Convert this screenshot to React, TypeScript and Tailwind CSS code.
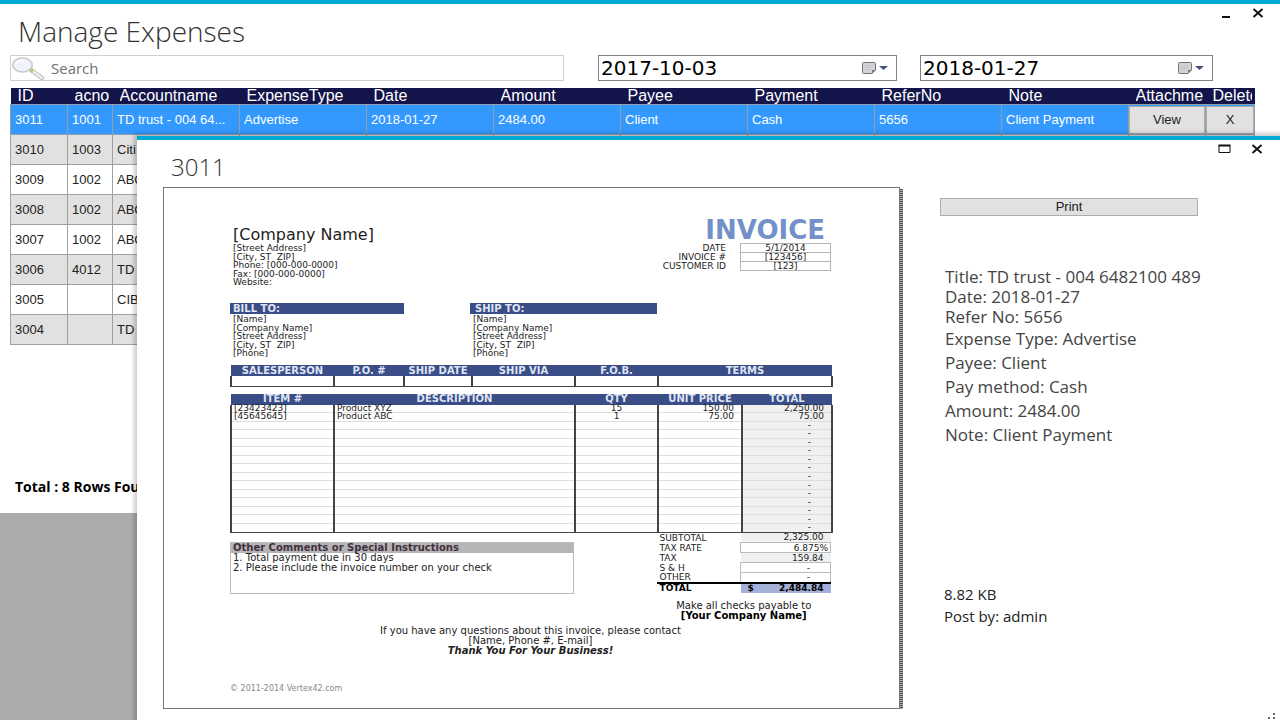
import type { ReactNode } from "react";

interface IExpense {
  id: string;
  acno: string;
  account: string;
}

const columns = [
  "ID",
  "acno",
  "Accountname",
  "ExpenseType",
  "Date",
  "Amount",
  "Payee",
  "Payment",
  "ReferNo",
  "Note",
  "Attachment",
  "Delete",
];

const selected = [
  "3011",
  "1001",
  "TD trust - 004 64...",
  "Advertise",
  "2018-01-27",
  "2484.00",
  "Client",
  "Cash",
  "5656",
  "Client Payment",
];

const expenses: IExpense[] = [
  { id: "3010", acno: "1003", account: "Citi" },
  { id: "3009", acno: "1002", account: "ABC" },
  { id: "3008", acno: "1002", account: "ABC" },
  { id: "3007", acno: "1002", account: "ABC" },
  { id: "3006", acno: "4012", account: "TD" },
  { id: "3005", acno: "", account: "CIBC" },
  { id: "3004", acno: "", account: "TD" },
];

function CloseIcon() {
  return (
    <svg width="12" height="10" viewBox="0 0 12 10" aria-hidden="true">
      <path d="M1.5 1 10.5 9M10.5 1 1.5 9" stroke="#111" strokeWidth="1.8" />
    </svg>
  );
}

function SearchIcon() {
  return (
    <svg width="34" height="23" viewBox="0 0 34 23" aria-hidden="true">
      <path d="M20 13 31 21" stroke="#bdbdbd" strokeWidth="4.5" strokeLinecap="round" />
      <path d="M21 13.5 31 21" stroke="#f0f0f0" strokeWidth="2.5" strokeLinecap="round" />
      <path d="M19 11.5 22 14.5" stroke="#b9cf4a" strokeWidth="3" />
      <ellipse cx="11.5" cy="8" rx="9.8" ry="7" fill="#f1f3fb" stroke="#c6c8cc" strokeWidth="1.6" />
      <path d="M5 7c1-3 5-4 8-3.5" stroke="#fff" strokeWidth="2" fill="none" />
    </svg>
  );
}

function DateBox({ label, value }: { label: string; value: string }) {
  return (
    <div className="flex h-full w-full items-center border border-[#828282] bg-white">
      <input
        aria-label={label}
        defaultValue={value}
        className="min-w-0 flex-1 pl-0.5 font-['DejaVu_Sans',sans-serif] text-[20px] leading-6 text-black outline-none"
      />
      <button type="button" aria-label={`Open ${label} calendar`} className="mr-2 flex">
        <svg width="26" height="12" viewBox="0 0 26 12" aria-hidden="true">
          <path
            d="M1.5.5h11a1 1 0 0 1 1 1V8L10 11.5H1.5a1 1 0 0 1-1-1v-9a1 1 0 0 1 1-1Z"
            fill="#d4d4d8"
            stroke="#77706e"
          />
          <path d="M3 3.5h8M3 5.5h8M3 7.5h6" stroke="#b9bcc6" strokeDasharray="1.5 1" />
          <path d="M10 11.5V8h3.5Z" fill="#777" />
          <path d="M17 4h9l-4.5 4Z" fill="#43527c" />
        </svg>
      </button>
    </div>
  );
}

function ExpenseTable() {
  return (
    <table className="w-full table-fixed border-collapse text-left text-[13px] leading-4 text-[#222]">
      <colgroup>
        <col className="w-[57px]" />
        <col className="w-[45px]" />
        {columns.slice(2, 10).map((name) => (
          <col key={name} />
        ))}
        <col className="w-[77px]" />
        <col className="w-[49px]" />
      </colgroup>
      <thead>
        <tr className="h-4 bg-[#13144a] text-[16px] text-white">
          {columns.map((name) => (
            <th key={name} className="p-0 pl-[7px] font-normal">
              <span className="mr-[3px] block overflow-x-clip whitespace-nowrap">{name}</span>
            </th>
          ))}
        </tr>
      </thead>
      <tbody>
        <tr className="h-[30px] bg-[#3399ff] text-white">
          {selected.map((cell, i) => (
            <td key={i} className="border border-[#8f9fb0] px-1 py-0 whitespace-nowrap">
              {cell}
            </td>
          ))}
          <td className="h-[30px] border border-[#8f9fb0] p-0">
            <button type="button" className="block h-[28px] w-full border border-[#adadad] bg-[#e1e1e1] text-[#222]">
              View
            </button>
          </td>
          <td className="h-[30px] border border-[#8f9fb0] p-0">
            <button type="button" className="block h-[28px] w-full border border-[#adadad] bg-[#e1e1e1] text-[#222]">
              X
            </button>
          </td>
        </tr>
        {expenses.map((row) => (
          <tr key={row.id} className="h-[30px] odd:bg-white even:bg-[#e1e1e1]">
            <td className="border border-[#a0a0a0] px-1 py-0">{row.id}</td>
            <td className="border border-[#a0a0a0] px-1 py-0">{row.acno}</td>
            <td className="border border-[#a0a0a0] px-1 py-0">{row.account}</td>
            {columns.slice(3).map((name) => (
              <td key={name} className="border border-[#a0a0a0] p-0" />
            ))}
          </tr>
        ))}
      </tbody>
    </table>
  );
}

function Lines({ items }: { items: string[] }) {
  return (
    <div className="flex h-[42px] flex-col justify-between pl-[3px] text-[9px]">
      {items.map((item) => (
        <p key={item} className="leading-[8px] whitespace-pre">
          {item}
        </p>
      ))}
    </div>
  );
}

function InvoiceCols() {
  return (
    <colgroup>
      <col className="w-[103px]" />
      <col className="w-[70px]" />
      <col className="w-[68px]" />
      <col className="w-[103px]" />
      <col className="w-[83px]" />
      <col className="w-[84px]" />
      <col className="w-[90px]" />
    </colgroup>
  );
}

function HeadCell({ children, span = 1 }: { children: ReactNode; span?: number }) {
  return (
    <th colSpan={span} className="p-0 font-bold whitespace-nowrap">
      {children}
    </th>
  );
}

const address = ["[Name]", "[Company Name]", "[Street Address]", "[City, ST  ZIP]", "[Phone]"];

const items = [
  { code: "[23423423]", text: "Product XYZ", qty: "15", price: "150.00", total: "2,250.00" },
  { code: "[45645645]", text: "Product ABC", qty: "1", price: "75.00", total: "75.00" },
  ...Array.from({ length: 13 }, () => ({ code: "", text: "", qty: "", price: "", total: "-" })),
];

function Invoice() {
  return (
    <article className="flex min-h-[522px] min-w-0 flex-1 flex-col border border-[#777] pt-[29px] pr-[68px] pl-[66px] font-['DejaVu_Sans',sans-serif] text-[10px] leading-[8px] text-[#222]">
      <header className="flex justify-between">
        <div className="pt-[9px]">
          <h2 className="pl-[3px] text-[16px] leading-[18px]">[Company Name]</h2>
          <Lines
            items={["[Street Address]", "[City, ST  ZIP]", "Phone: [000-000-0000]", "Fax: [000-000-0000]", "Website:"]}
          />
        </div>
        <div className="flex flex-col items-end">
          <h2 className="pr-[6px] text-[26px] leading-[26px] font-bold text-[#7391c8]">INVOICE</h2>
          <table className="border-collapse text-center text-[9px]">
            <tbody>
              {[
                ["DATE", "5/1/2014"],
                ["INVOICE #", "[123456]"],
                ["CUSTOMER ID", "[123]"],
              ].map(([label, value]) => (
                <tr key={label} className="h-[9px]">
                  <th className="p-0 pr-[14px] text-right font-normal">{label}</th>
                  <td className="w-[90px] border border-[#b5b5b5] p-0">{value}</td>
                </tr>
              ))}
            </tbody>
          </table>
        </div>
      </header>

      <section className="mt-[17px] grid grid-cols-[174fr_66fr_187fr_174fr]">
        <div>
          <h3 className="mb-px h-[11px] bg-[#3b4d86] pl-[3px] leading-[11px] font-bold text-[#dfe5f4]">BILL TO:</h3>
          <Lines items={address} />
        </div>
        <div className="col-start-3">
          <h3 className="mb-px h-[11px] bg-[#3b4d86] pl-[5px] leading-[11px] font-bold text-[#dfe5f4]">SHIP TO:</h3>
          <Lines items={address} />
        </div>
      </section>

      <table className="mt-2 w-full table-fixed border-collapse text-center">
        <InvoiceCols />
        <thead>
          <tr className="h-[11px] bg-[#3b4d86] text-[#dfe5f4]">
            <HeadCell>SALESPERSON</HeadCell>
            <HeadCell>P.O. #</HeadCell>
            <HeadCell>SHIP DATE</HeadCell>
            <HeadCell>SHIP VIA</HeadCell>
            <HeadCell>F.O.B.</HeadCell>
            <HeadCell span={2}>TERMS</HeadCell>
          </tr>
        </thead>
        <tbody className="[&_td]:border-x-2 [&_td]:border-b [&_td]:border-[#444] [&_td]:p-0">
          <tr className="h-[10px]">
            <td />
            <td />
            <td />
            <td />
            <td />
            <td colSpan={2} />
          </tr>
        </tbody>
      </table>

      <table className="mt-[7px] h-[139px] w-full table-fixed border-collapse">
        <InvoiceCols />
        <thead>
          <tr className="h-[11px] bg-[#3b4d86] text-[#dfe5f4]">
            <HeadCell>ITEM #</HeadCell>
            <HeadCell span={3}>DESCRIPTION</HeadCell>
            <HeadCell>QTY</HeadCell>
            <HeadCell>UNIT PRICE</HeadCell>
            <HeadCell>TOTAL</HeadCell>
          </tr>
        </thead>
        <tbody className="text-[9px] [&_td]:border-x-2 [&_td]:border-b [&_td]:border-x-[#444] [&_td]:border-b-[#ddd] [&_td]:py-0 [&_td]:leading-[7px] [&_tr:last-child_td]:border-b-[#444]">
          {items.map((item, i) => (
            <tr key={i}>
              <td className="px-0.5">{item.code}</td>
              <td colSpan={3} className="px-0.5">
                {item.text}
              </td>
              <td className="px-0.5 text-center">{item.qty}</td>
              <td className="px-[7px] text-right">{item.price}</td>
              <td className={item.total === "-" ? "bg-[#f0f0f0] pr-[20px] text-right" : "bg-[#f0f0f0] pr-[7px] text-right"}>
                {item.total}
              </td>
            </tr>
          ))}
        </tbody>
      </table>

      <div className="grid grid-cols-[344fr_83fr_174fr]">
        <section className="mt-[9px] h-[52px] border border-[#bbb]">
          <h3 className="bg-[#b5b5b5] pl-0.5 leading-[10px] font-bold text-[#432f3f]">
            Other Comments or Special Instructions
          </h3>
          <ol className="pl-0.5 leading-[10px]">
            <li>1. Total payment due in 30 days</li>
            <li>2. Please include the invoice number on your check</li>
          </ol>
        </section>
        <table className="col-start-3 w-full table-fixed border-collapse self-start text-right">
          <colgroup>
            <col className="w-[84px]" />
            <col className="w-[90px]" />
          </colgroup>
          <tbody className="text-[9px] [&_td]:py-0 [&_th]:p-0 [&_th]:pl-[3px] [&_th]:text-left">
            <tr className="h-[10px]">
              <th className="font-normal">SUBTOTAL</th>
              <td className="bg-[#f0f0f0] pr-[7px]">2,325.00</td>
            </tr>
            <tr className="h-[10px]">
              <th className="font-normal">TAX RATE</th>
              <td className="border border-[#bbb] pr-0.5">6.875%</td>
            </tr>
            <tr className="h-[10px]">
              <th className="font-normal">TAX</th>
              <td className="bg-[#f0f0f0] pr-[7px]">159.84</td>
            </tr>
            <tr className="h-[10px]">
              <th className="font-normal">S &amp; H</th>
              <td className="border border-[#bbb] pr-[20px]">-</td>
            </tr>
            <tr className="h-[10px]">
              <th className="font-normal">OTHER</th>
              <td className="border border-[#bbb] pr-[20px]">-</td>
            </tr>
            <tr className="h-[10px] border-t-2 border-black font-bold text-black">
              <th>TOTAL</th>
              <td className="bg-[#a5b0d8] pr-[7px] pl-[7px]">
                <span className="flex justify-between">
                  <span>$</span>
                  <span>2,484.84</span>
                </span>
              </td>
            </tr>
          </tbody>
        </table>
        <p className="col-start-3 mt-[7px] text-center leading-[10px] whitespace-nowrap">
          Make all checks payable to
          <br />
          <b className="text-black">[Your Company Name]</b>
        </p>
      </div>

      <footer className="mt-[5px] text-center leading-[10px]">
        <p>If you have any questions about this invoice, please contact</p>
        <p>[Name, Phone #, E-mail]</p>
        <p className="font-bold italic">Thank You For Your Business!</p>
      </footer>
      <p className="mt-[29px] text-[8px] text-[#888]">© 2011-2014 Vertex42.com</p>
    </article>
  );
}

function ExpenseDialog() {
  return (
    <section
      role="dialog"
      aria-label="Expense 3011"
      className="absolute top-[136px] right-0 bottom-0 left-[137px] border-t-4 border-[#00aad8] bg-white shadow-[0_0_4px_3px_rgba(0,0,0,0.2)]"
    >
      <header className="flex h-[47px] items-start justify-between pr-[17px] pl-[34px]">
        <h1 className="pt-[13px] font-['Open_Sans',sans-serif] text-[24px] leading-7 font-light text-[#333]">3011</h1>
        <div className="flex gap-5 pt-1">
          <button type="button" aria-label="Maximize">
            <svg width="13" height="10" viewBox="0 0 13 10" aria-hidden="true">
              <path d="M1 1.5h11v7H1Z" fill="none" stroke="#111" />
              <path d="M.5 1.5h12" stroke="#111" strokeWidth="2" />
            </svg>
          </button>
          <button type="button" aria-label="Close">
            <CloseIcon />
          </button>
        </div>
      </header>
      <div className="flex pl-[26px]">
        <Invoice />
        <div className="mt-0.5 w-[3px] bg-[repeating-linear-gradient(#555_0_1px,#aaa_1px_2px)]" />
        <aside className="ml-[37px] w-[340px] font-['Open_Sans',sans-serif] text-[17px] text-[#444]">
          <button
            type="button"
            className="mt-[11px] block h-[18px] w-[258px] border border-[#adadad] bg-[#e1e1e1] font-['Liberation_Sans',Arial,sans-serif] text-[13px] leading-4 text-[#222]"
          >
            Print
          </button>
          <div className="mt-[51px] pl-[5px] leading-5">
            <p>Title: TD trust - 004 6482100 489</p>
            <p>Date: 2018-01-27</p>
            <p>Refer No: 5656</p>
            <div className="leading-6">
              <p>Expense Type: Advertise</p>
              <p>Payee: Client</p>
              <p>Pay method: Cash</p>
              <p>Amount: 2484.00</p>
              <p>Note: Client Payment</p>
            </div>
          </div>
          <div className="mt-[136px] pl-1 text-[15px] leading-[22px] text-[#222]">
            <p>8.82 KB</p>
            <p>Post by: admin</p>
          </div>
        </aside>
      </div>
      <svg className="absolute right-1 bottom-0" width="8" height="7" viewBox="0 0 8 7" aria-hidden="true">
        <path d="M5 0h2v2H5ZM5 4h2v2H5ZM0 4h2v2H0Z" fill="#666" />
      </svg>
    </section>
  );
}

export default function App() {
  return (
    <div className="relative min-h-screen overflow-hidden bg-[#ababab] font-['Liberation_Sans',Arial,sans-serif]">
      <main className="border-t-4 border-[#00aad8] bg-white pb-[17px]">
        <header className="flex h-[51px] items-start justify-between pr-4 pl-[18px]">
          <h1 className="pt-[13px] font-['Open_Sans',sans-serif] text-[28px] leading-7 font-light text-[#333]">
            Manage Expenses
          </h1>
          <div className="flex gap-5 pt-1">
            <button type="button" aria-label="Minimize">
              <svg width="12" height="10" viewBox="0 0 12 10" aria-hidden="true">
                <path d="M2 9h8" stroke="#111" strokeWidth="2" />
              </svg>
            </button>
            <button type="button" aria-label="Close">
              <CloseIcon />
            </button>
          </div>
        </header>

        <div className="grid h-[25px] grid-cols-[554fr_34fr_299fr_23fr_293fr] pr-[67px] pl-[10px]">
          <div className="flex items-center gap-1.5 border border-[#cfcfcf] bg-white">
            <SearchIcon />
            <input
              aria-label="Search"
              placeholder="Search"
              className="min-w-0 flex-1 font-['Open_Sans',sans-serif] text-[15px] leading-5 outline-none placeholder:text-[#707070]"
            />
          </div>
          <div className="col-start-3">
            <DateBox label="From date" value="2017-10-03" />
          </div>
          <div className="col-start-5">
            <DateBox label="To date" value="2018-01-27" />
          </div>
        </div>

        <div className="mt-2 pr-[25px] pl-[10px]">
          <ExpenseTable />
        </div>
        <p className="mt-[133px] pl-[15px] font-['Open_Sans',sans-serif] text-[14px] leading-[18px] font-bold text-black">
          Total : 8 Rows Found
        </p>
      </main>
      <ExpenseDialog />
    </div>
  );
}
